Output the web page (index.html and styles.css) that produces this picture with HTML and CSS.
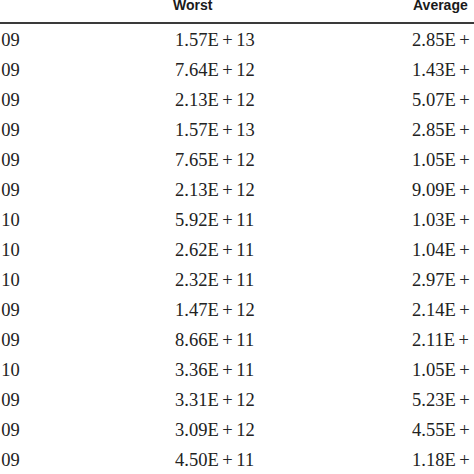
FILE: index.html
```html
<!DOCTYPE html>
<html>
<head>
<meta charset="utf-8">
<link rel="stylesheet" href="styles.css">
</head>
<body>
<div class="table">
  <div class="head">
    <div class="hcell"></div>
    <div class="hcell">Worst</div>
    <div class="hcell">Average</div>
  </div>
  <div class="rule"></div>
  <div class="body">
    <div class="row"><span>4.12E + 09</span><span>1.57E + 13</span><span>2.85E + 12</span></div>
    <div class="row"><span>2.06E + 09</span><span>7.64E + 12</span><span>1.43E + 12</span></div>
    <div class="row"><span>5.73E + 09</span><span>2.13E + 12</span><span>5.07E + 11</span></div>
    <div class="row"><span>4.12E + 09</span><span>1.57E + 13</span><span>2.85E + 12</span></div>
    <div class="row"><span>2.06E + 09</span><span>7.65E + 12</span><span>1.05E + 12</span></div>
    <div class="row"><span>5.73E + 09</span><span>2.13E + 12</span><span>9.09E + 11</span></div>
    <div class="row"><span>1.56E + 10</span><span>5.92E + 11</span><span>1.03E + 11</span></div>
    <div class="row"><span>1.27E + 10</span><span>2.62E + 11</span><span>1.04E + 11</span></div>
    <div class="row"><span>1.08E + 10</span><span>2.32E + 11</span><span>2.97E + 10</span></div>
    <div class="row"><span>6.44E + 09</span><span>1.47E + 12</span><span>2.14E + 11</span></div>
    <div class="row"><span>8.31E + 09</span><span>8.66E + 11</span><span>2.11E + 11</span></div>
    <div class="row"><span>1.12E + 10</span><span>3.36E + 11</span><span>1.05E + 11</span></div>
    <div class="row"><span>3.25E + 09</span><span>3.31E + 12</span><span>5.23E + 11</span></div>
    <div class="row"><span>3.47E + 09</span><span>3.09E + 12</span><span>4.55E + 11</span></div>
    <div class="row"><span>9.82E + 09</span><span>4.50E + 11</span><span>1.18E + 11</span></div>
  </div>
</div>
</body>
</html>
```

FILE: styles.css
```css
html, body {
  margin: 0;
  padding: 0;
  background: #ffffff;
  overflow: hidden;
}

.table {
  margin-left: -60px;
  width: 711px;
}

.head {
  display: grid;
  grid-template-columns: 233px 240px 236px;
  height: 22px;
  font-family: "Liberation Sans", Arial, sans-serif;
  font-weight: bold;
  font-size: 14px;
  line-height: 10px;
  color: #1a1a1a;
}

.hcell {
  white-space: nowrap;
}

.rule {
  height: 2px;
  background: #3a3a3a;
}

.body {
  padding-top: 1px;
}

.row {
  display: grid;
  grid-template-columns: 235px 237px 237px;
  height: 30px;
  font-family: "Liberation Serif", "Times New Roman", serif;
  font-size: 18.5px;
  line-height: 30px;
  word-spacing: -1px;
  color: #222222;
  white-space: nowrap;
}
```
